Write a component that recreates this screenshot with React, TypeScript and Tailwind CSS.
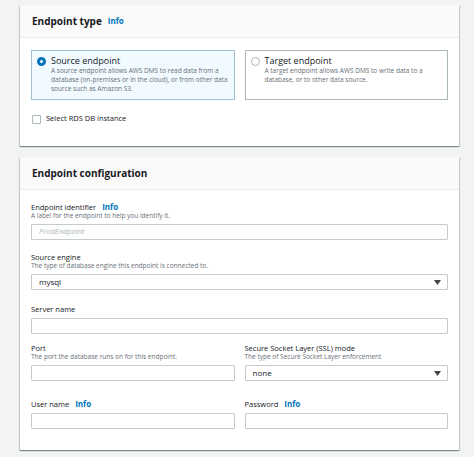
import React from "react";

const FONT = { fontFamily: '"Open Sans", "Liberation Sans", sans-serif' };

function Info() {
  return <span className="ml-[6px] text-[8px] font-bold text-[#0073bb]">Info</span>;
}

function Field({
  label,
  info,
  desc,
  className = "",
  children,
}: {
  label: string;
  info?: boolean;
  desc?: string;
  className?: string;
  children: React.ReactNode;
}) {
  return (
    <div className={`flex flex-col ${className}`}>
      <div className="text-[7.5px] leading-[10px] text-[#16191f] whitespace-nowrap">
        {label}
        {info && <Info />}
      </div>
      {desc && <div className="text-[6.5px] leading-[8px] text-[#687078] whitespace-nowrap">{desc}</div>}
      <div className="mt-[4px]">{children}</div>
    </div>
  );
}

function Input({ placeholder }: { placeholder?: string }) {
  return (
    <div className="h-[16px] border border-[#c6cccc] bg-white rounded-[1px] px-[7px] flex items-center text-[7.5px] italic text-[#aab7b8]">
      {placeholder}
    </div>
  );
}

function Select({ value }: { value: string }) {
  return (
    <div className="h-[16px] border border-[#c6cccc] bg-white rounded-[1px] pl-[7px] pr-[6px] flex items-center justify-between text-[8px] text-[#16191f]">
      <span>{value}</span>
      <svg width="7" height="5" viewBox="0 0 7 5">
        <path d="M0 0 L7 0 L3.5 5 Z" fill="#444" />
      </svg>
    </div>
  );
}

function Panel({ title, info, children }: { title: string; info?: boolean; children: React.ReactNode }) {
  return (
    <section className="bg-white shadow-[0_1px_1px_0_rgba(0,28,36,0.3),1px_1px_1px_0_rgba(0,28,36,0.15),-1px_1px_1px_0_rgba(0,28,36,0.15)]">
      <header className="h-[33px] bg-[#fafafa] border-b border-[#eaeded] px-[12px] flex items-center">
        <h2 className="text-[10px] font-bold text-[#16191f]">{title}</h2>
        {info && <Info />}
      </header>
      {children}
    </section>
  );
}

function Tile({
  selected,
  title,
  desc,
}: {
  selected?: boolean;
  title: string;
  desc: string;
}) {
  return (
    <div
      className={`h-[50px] border px-[5px] pt-[5px] flex gap-[5px] ${
        selected ? "border-[#9fbfd3] bg-[#f1faff]" : "border-[#aab7b8] bg-white"
      }`}
    >
      {selected ? (
        <span className="mt-[1px] w-[9px] h-[9px] rounded-full border-[3px] border-[#0073bb] bg-white shrink-0" />
      ) : (
        <span className="mt-[1px] w-[9px] h-[9px] rounded-full border border-[#aab7b8] bg-white shrink-0" />
      )}
      <div>
        <div className="text-[9px] leading-[10px] text-[#16191f]">{title}</div>
        <div className="text-[6.5px] leading-[9px] text-[#687078]">{desc}</div>
      </div>
    </div>
  );
}

export default function App() {
  return (
    <div style={FONT} className="w-[474px] h-[457px] bg-[#f2f3f3] pt-[5px] pl-[20px] pr-[15px] flex flex-col gap-[11px] overflow-hidden">
      <Panel title="Endpoint type" info>
        <div className="px-[11px] pt-[12px] pb-[22px]">
          <div className="grid grid-cols-2 gap-[10px]">
            <Tile
              selected
              title="Source endpoint"
              desc="A source endpoint allows AWS DMS to read data from a database (on-premises or in the cloud), or from other data source such as Amazon S3."
            />
            <Tile
              title="Target endpoint"
              desc="A target endpoint allows AWS DMS to write data to a database, or to other data source."
            />
          </div>
          <label className="mt-[14px] h-[10px] flex items-center gap-[5px] text-[7.5px] text-[#16191f]">
            <span className="ml-[1px] w-[9px] h-[9px] border border-[#aab7b8] rounded-[1px] bg-white" />
            Select RDS DB instance
          </label>
        </div>
      </Panel>

      <Panel title="Endpoint configuration">
        <div className="px-[11px] pt-[12px] pb-[21px] flex flex-col">
          <Field label="Endpoint identifier" info desc="A label for the endpoint to help you identify it.">
            <Input placeholder="ProdEndpoint" />
          </Field>
          <Field className="mt-[12px]" label="Source engine" desc="The type of database engine this endpoint is connected to.">
            <Select value="mysql" />
          </Field>
          <Field className="mt-[14px]" label="Server name">
            <Input />
          </Field>
          <div className="grid grid-cols-2 gap-[10px] mt-[9px]">
            <Field label="Port" desc="The port the database runs on for this endpoint.">
              <Input />
            </Field>
            <Field label="Secure Socket Layer (SSL) mode" desc="The type of Secure Socket Layer enforcement">
              <Select value="none" />
            </Field>
          </div>
          <div className="grid grid-cols-2 gap-[10px] mt-[18px]">
            <Field label="User name" info>
              <Input />
            </Field>
            <Field label="Password" info>
              <Input />
            </Field>
          </div>
        </div>
      </Panel>
    </div>
  );
}
